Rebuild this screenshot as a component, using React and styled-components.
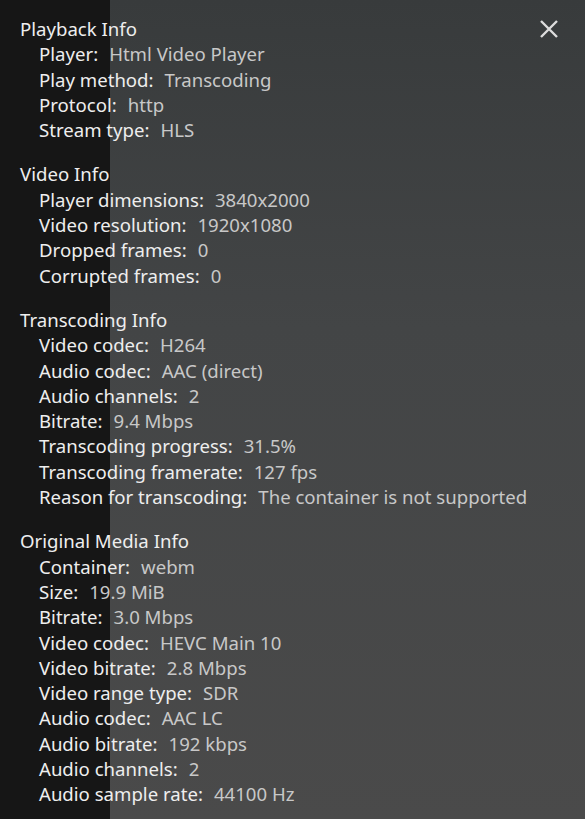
import React from "react";
import styled, { createGlobalStyle } from "styled-components";

const Global = createGlobalStyle`
  html, body { margin: 0; padding: 0; }
  body {
    width: 585px;
    height: 819px;
    overflow: hidden;
    font-family: "Noto Sans", "Open Sans", sans-serif;
    background:
      linear-gradient(to right, #161616 0, #161616 110px, transparent 110px),
      linear-gradient(to bottom, #383b3c 0%, #434546 40%, #4a4a4a 100%);
  }
`;

const Panel = styled.div`
  position: relative;
  padding: 16px 20px 0 20px;
  color: #eee;
  -webkit-font-smoothing: antialiased;
`;

const Close = styled.button`
  position: absolute;
  top: 15px;
  right: 22px;
  width: 28px;
  height: 28px;
  padding: 0;
  border: 0;
  background: none;
  display: flex;
  align-items: center;
  justify-content: center;
  color: #ddd;
`;

const Section = styled.section`
  margin-bottom: 19px;
`;

const Heading = styled.div`
  font-size: 18.6px;
  line-height: 25.3px;
  color: #eee;
`;

const Row = styled.div`
  padding-left: 19px;
  font-size: 18.6px;
  line-height: 25.3px;
  white-space: nowrap;
`;

const Label = styled.span`
  color: #eee;
`;

const Value = styled.span`
  color: #c8c8c8;
  margin-left: 11px;
`;

const sections = [
  {
    title: "Playback Info",
    rows: [
      ["Player", "Html Video Player"],
      ["Play method", "Transcoding"],
      ["Protocol", "http"],
      ["Stream type", "HLS"],
    ],
  },
  {
    title: "Video Info",
    rows: [
      ["Player dimensions", "3840x2000"],
      ["Video resolution", "1920x1080"],
      ["Dropped frames", "0"],
      ["Corrupted frames", "0"],
    ],
  },
  {
    title: "Transcoding Info",
    rows: [
      ["Video codec", "H264"],
      ["Audio codec", "AAC (direct)"],
      ["Audio channels", "2"],
      ["Bitrate", "9.4 Mbps"],
      ["Transcoding progress", "31.5%"],
      ["Transcoding framerate", "127 fps"],
      ["Reason for transcoding", "The container is not supported"],
    ],
  },
  {
    title: "Original Media Info",
    rows: [
      ["Container", "webm"],
      ["Size", "19.9 MiB"],
      ["Bitrate", "3.0 Mbps"],
      ["Video codec", "HEVC Main 10"],
      ["Video bitrate", "2.8 Mbps"],
      ["Video range type", "SDR"],
      ["Audio codec", "AAC LC"],
      ["Audio bitrate", "192 kbps"],
      ["Audio channels", "2"],
      ["Audio sample rate", "44100 Hz"],
    ],
  },
];

export default function App() {
  return (
    <>
      <Global />
      <Panel>
        <Close aria-label="Close">
          <svg width="20" height="20" viewBox="0 0 20 20">
            <path d="M2 2 L18 18 M18 2 L2 18" stroke="currentColor" strokeWidth="2.4" />
          </svg>
        </Close>
        {sections.map((s) => (
          <Section key={s.title}>
            <Heading>{s.title}</Heading>
            {s.rows.map(([l, v]) => (
              <Row key={l}>
                <Label>{l}:</Label>
                <Value>{v}</Value>
              </Row>
            ))}
          </Section>
        ))}
      </Panel>
    </>
  );
}
